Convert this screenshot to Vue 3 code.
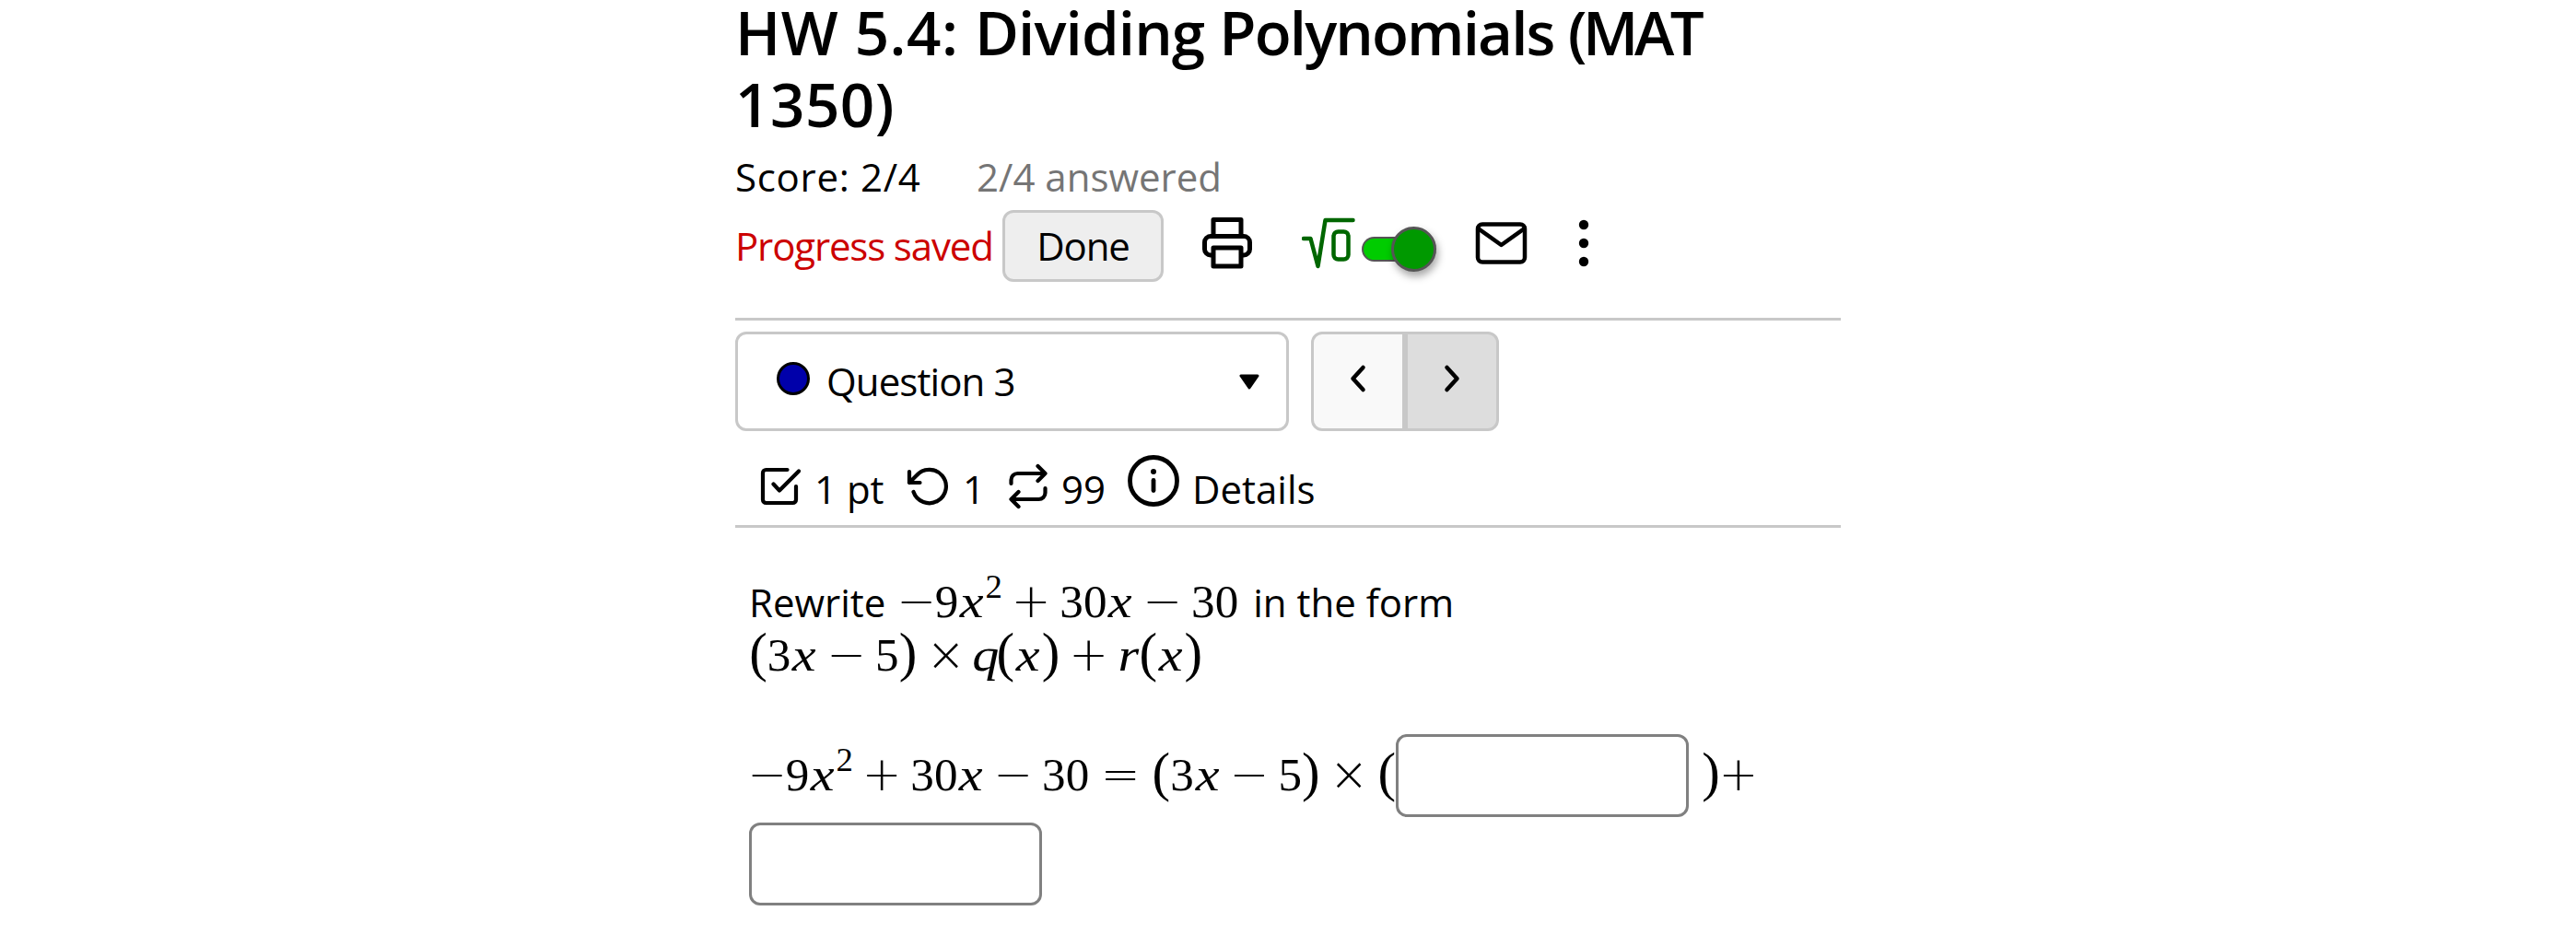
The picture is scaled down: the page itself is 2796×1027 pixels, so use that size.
<template>
  <main class="assess">
    <header class="assess-header">
      <h1>
        <span class="hw">HW 5.4: </span><span class="dividing">Dividing </span><span class="poly">Polynomials </span><span class="mat">(MAT</span><br />
        <span class="course">1350)</span>
      </h1>
      <div class="score-row">
        <span class="score">Score: 2/4</span>
        <span class="answered">2/4 answered</span>
      </div>
      <div class="tools">
        <span class="saved">Progress saved</span>
        <button class="done">Done</button>
        <svg class="icon-print" width="60" height="60" viewBox="0 0 60 60">
          <path d="M12 22V4.500H42V22M12 43H9a6.500 6.500 0 0 1-6.500-6.500V29A6.500 6.500 0 0 1 9 22.500H45a6.500 6.500 0 0 1 6.500 6.500V36.500A6.500 6.500 0 0 1 45 43H42M12 35H42V55H12z" />
        </svg>
        <svg class="icon-root" width="60" height="60" viewBox="0 0 60 60">
          <path d="M2 25H9.500L17.500 55L25.500 5H55.500" />
          <rect x="34.500" y="17.500" width="16" height="30" rx="5" />
        </svg>
        <span class="switch"><span class="knob"></span></span>
        <svg class="icon-mail" width="60" height="60" viewBox="0 0 60 60">
          <rect x="3" y="9.500" width="51" height="41" rx="5" />
          <path d="M4 14.500L28.500 32L53 14.500" />
        </svg>
        <svg class="icon-dots" width="12" height="60" viewBox="0 0 12 60">
          <circle v-for="y in [10, 30, 50]" :key="y" cx="6" :cy="y" r="5.200" />
        </svg>
      </div>
    </header>

    <nav class="question-nav">
      <div class="question-select">
        <span class="status"></span>
        <span class="question-name">Question 3</span>
        <svg width="22" height="17" viewBox="0 0 22 17"><path d="M2 2H20L11 15z" /></svg>
      </div>
      <div class="pager">
        <button class="prev">
          <svg width="20" height="32" viewBox="0 0 20 32"><path d="M15.500 4L4.500 16L15.500 28" /></svg>
        </button>
        <button class="next">
          <svg width="20" height="32" viewBox="0 0 20 32"><path d="M4.500 4L15.500 16L4.500 28" /></svg>
        </button>
      </div>
    </nav>

    <div class="details">
      <svg class="icon-check" width="44" height="50" viewBox="0 0 44 50">
        <path d="M29.500 7H6.500A3.500 3.500 0 0 0 3 10.500V39.500A3.500 3.500 0 0 0 6.500 43H35.500A3.500 3.500 0 0 0 39 39.500V25M14.500 22.500L21 29.500L42 8.500" />
      </svg>
      <span class="points">1 pt</span>
      <svg class="icon-undo" width="46" height="50" viewBox="0 0 46 50">
        <path d="M3 9V21H14.500M3 21L11 13A18.200 18.200 0 1 1 7.500 31" />
      </svg>
      <span class="tries">1</span>
      <svg class="icon-repeat" width="44" height="50" viewBox="0 0 44 50">
        <path d="M2.500 22V18A7 7 0 0 1 9.500 11H39.500M31.500 3L39.500 11L31.500 19M39.500 27V32A7 7 0 0 1 32.500 39H2.500M10.500 31L2.500 39L10.500 47" />
      </svg>
      <span class="regens">99</span>
      <svg class="icon-info" width="56" height="56" viewBox="0 0 56 56">
        <circle cx="28" cy="28" r="25.500" />
        <path d="M28 27.500V38.500" />
        <circle class="dot" cx="28" cy="18" r="3" />
      </svg>
      <span class="details-label">Details</span>
    </div>

    <section class="question">
      <p class="line">
        <span class="rewrite">Rewrite</span>
        <span class="math">
          <span v-for="(t, i) in polynomial" :key="i" :class="t[1]">{{ t[0] }}</span>
        </span>
        <span class="form">in the form</span>
      </p>
      <p class="line">
        <span class="math">
          <span v-for="(t, i) in form" :key="i" :class="t[1]">{{ t[0] }}</span>
        </span>
      </p>
      <p class="line answer">
        <span class="math">
          <span v-for="(t, i) in equation" :key="i" :class="t[1]">{{ t[0] }}</span>
        </span>
        <input type="text" aria-label="Quotient" />
        <span class="math"><span class="paren">)</span><span class="sign">+</span></span>
      </p>
      <input type="text" aria-label="Remainder" />
    </section>
  </main>
</template>

<script setup>
// each token is [glyph, spacing class]
const polynomial = [
  ['−', 'sign'], ['9', 'num'], ['x', 'var'], ['2', 'sup'],
  ['+', 'op'], ['3', 'num'], ['0', 'num'], ['x', 'var'],
  ['−', 'op'], ['3', 'num'], ['0', 'num']
]

const divisor = [['(', 'paren'], ['3', 'num'], ['x', 'var'], ['−', 'op'], ['5', 'num'], [')', 'paren']]

const form = [
  ...divisor,
  ['×', 'op'], ['q', 'var narrow'], ['(', 'paren'], ['x', 'var'], [')', 'paren'],
  ['+', 'op'], ['r', 'var narrow'], ['(', 'paren'], ['x', 'var'], [')', 'paren']
]

const equation = [...polynomial, ['=', 'op rel'], ...divisor, ['×', 'op'], ['(', 'paren']]
</script>

<style>
body {
  margin: 0;
  background: #fff;
}
</style>

<style scoped>
.assess {
  width: 1200px;
  height: 1027px;
  margin: 0 auto;
  font-family: 'Open Sans', 'Noto Sans', sans-serif;
  font-size: 42px;
  line-height: 56px;
  color: #000;
  white-space: nowrap;
}

.assess-header {
  display: flow-root;
  height: 345px;
  border-bottom: 3px solid #c8c8c8;
}

h1 {
  height: 164px;
  margin: -4px 0 0;
  font-size: 65.500px;
  font-weight: 600;
  line-height: 78px;
}

.hw,
.course {
  letter-spacing: 0.500px;
}

.dividing {
  letter-spacing: -0.900px;
}

.poly {
  letter-spacing: -1.900px;
}

.mat {
  letter-spacing: -4.400px;
}

.score-row {
  display: flex;
  height: 66px;
  padding-top: 3px;
  box-sizing: border-box;
  line-height: 58px;
}

.score {
  width: 262px;
  letter-spacing: 0.700px;
}

.answered {
  color: #757575;
}

.tools {
  display: flex;
  align-items: center;
  height: 82px;
}

.saved {
  width: 290px;
  letter-spacing: -1.150px;
  color: #c00;
}

.done {
  width: 175px;
  height: 78px;
  padding: 0;
  border: 3px solid #c8c8c8;
  border-radius: 12px;
  background: #eee;
  font: inherit;
  letter-spacing: -1.200px;
  color: #000;
}

svg {
  flex: none;
  fill: none;
  stroke: #000;
  stroke-width: 4.500px;
  stroke-linecap: round;
  stroke-linejoin: round;
}

.tools svg {
  margin-bottom: 6px;
}

.icon-print {
  margin-left: 42px;
  stroke-width: 5px;
}

.tools .icon-root {
  margin-left: 48px;
  stroke: #060;
}

.switch {
  display: flex;
  align-items: center;
  width: 81px;
  height: 27px;
  margin: 6px 0 0 5px;
  border: 2.500px solid #555;
  border-right: 0;
  border-radius: 14px;
  box-sizing: border-box;
  background: linear-gradient(90deg, #0c0 50%, transparent 50%);
}

.knob {
  flex: none;
  width: 49px;
  height: 49px;
  margin-left: auto;
  border: 3px solid #555;
  border-radius: 50%;
  box-sizing: border-box;
  background: #090;
  box-shadow: 2px 5px 8px rgba(0, 0, 0, 0.35);
}

.icon-mail {
  margin-left: 42px;
}

.icon-dots {
  margin-left: 52px;
  fill: #000;
  stroke: none;
}

.question-nav {
  display: flex;
  gap: 24px;
  padding-top: 12px;
}

.question-select {
  display: flex;
  align-items: center;
  width: 601px;
  height: 108px;
  padding: 0 29px 0 42px;
  border: 3px solid #c8c8c8;
  border-radius: 12px;
  box-sizing: border-box;
}

.status {
  width: 36px;
  height: 36px;
  margin: 0 18px 6px 0;
  border: 3px solid #000;
  border-radius: 50%;
  box-sizing: border-box;
  background: #00a;
}

.question-name {
  letter-spacing: -0.900px;
}

.question-select svg {
  margin-left: auto;
  fill: #000;
  stroke-width: 3px;
}

.pager {
  display: flex;
}

.pager button {
  display: flex;
  align-items: center;
  justify-content: center;
  width: 102px;
  height: 108px;
  padding: 0 0 6px;
  border: 3px solid #c8c8c8;
  border-radius: 12px 0 0 12px;
  background: #f9f9f9;
}

.pager .next {
  border-radius: 0 12px 12px 0;
  background: #ddd;
}

.details {
  display: flex;
  height: 105px;
  padding: 35px 0 0 27px;
  box-sizing: border-box;
  border-bottom: 3px solid #c8c8c8;
}

.details svg {
  stroke-width: 4.200px;
}

.points {
  width: 100px;
  margin-left: 15px;
}

.tries {
  width: 50px;
  margin-left: 15px;
}

.regens {
  width: 72px;
  margin-left: 13px;
}

.details .icon-info {
  margin: -9px 14px 0 0;
  stroke-width: 4.800px;
}

.icon-info .dot {
  fill: #000;
  stroke: none;
}

.question {
  padding: 52px 0 0 15px;
}

.line {
  display: flex;
  align-items: baseline;
  height: 56px;
  margin: 0;
}

.rewrite {
  width: 162px;
}

.form {
  margin-left: 16px;
}

.math {
  display: flex;
  align-items: baseline;
  font-family: 'Liberation Serif', serif;
  font-size: 51.100px;
}

.math span {
  display: flex;
  justify-content: center;
  flex: none;
}

.math .num {
  width: 0.5em;
}

.math .var {
  width: 0.572em;
  font-style: italic;
  transform: scaleX(1.14);
}

.math .narrow {
  width: 0.46em;
}

.math .paren {
  width: 0.338em;
  font-size: 1.15em;
}

.math .op,
.math .sign {
  width: 0.778em;
  font-family: 'DejaVu Sans ExtraLight', 'DejaVu Sans', sans-serif;
  font-weight: 200;
}

.math .op {
  margin: 0 0.222em;
}

.math .rel {
  margin: 0 0.278em;
}

.math .sup {
  width: 0.5em;
  font-size: 0.720em;
  transform: translateY(-0.580em);
}

.answer {
  height: 96px;
  margin-top: 60px;
}

.answer .math {
  line-height: 84px;
}

input {
  display: block;
  width: 318px;
  height: 90px;
  padding: 0;
  border: 3px solid #808080;
  border-radius: 12px;
  box-sizing: border-box;
  background: #fff;
}

.answer input {
  align-self: flex-start;
  margin-right: 14px;
}
</style>
